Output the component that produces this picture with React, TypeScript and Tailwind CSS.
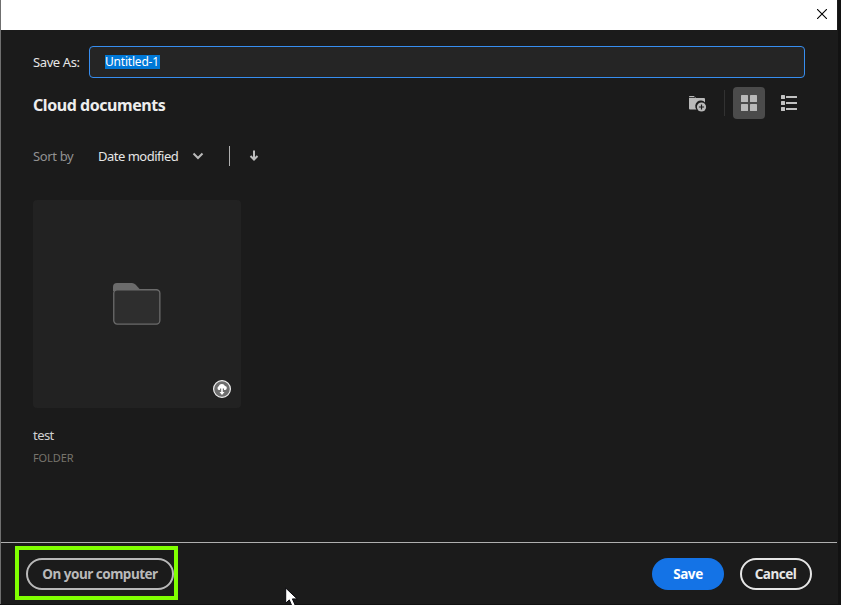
import React from "react";

function FolderPlus() {
  return (
    <svg width="20" height="20" viewBox="0 0 20 20" className="relative top-px block">
      <path d="M1 2.800Q1 2 1.800 2H5.800L8 4H16Q17 4 17 5V8.500A5.500 5.500 0 0 0 8.500 15.500H2Q1 15.500 1 14.500Z" fill="#b9b9b9" />
      <path d="M1 3.500H7" stroke="#1b1b1b" strokeWidth="0.8" />
      <circle cx="13.500" cy="13" r="4.600" fill="#b9b9b9" />
      <path d="M13.500 10.400V15.600M10.900 13H16.100" stroke="#1b1b1b" strokeWidth="1.200" />
    </svg>
  );
}

function GridIcon() {
  return (
    <svg width="16" height="16" viewBox="0 0 16 16" fill="#b9b9b9">
      <rect width="7" height="7" rx=".5" />
      <rect x="9" width="7" height="7" rx=".5" />
      <rect y="9" width="7" height="7" rx=".5" />
      <rect x="9" y="9" width="7" height="7" rx=".5" />
    </svg>
  );
}

function ListIcon() {
  return (
    <svg width="16" height="16" viewBox="0 0 16 16" fill="#c2c2c2">
      {[0, 6, 12].map((y) => (
        <g key={y}>
          <rect y={y} width="4" height="4" rx=".5" />
          <rect x="5" y={y + 1} width="11" height="2" rx=".3" />
        </g>
      ))}
    </svg>
  );
}

function FolderCard() {
  return (
    <div className="relative flex h-[208px] w-[208px] items-center justify-center rounded bg-[#222222]">
      <svg width="48" height="42" viewBox="0 0 48 42" className="block">
        <path d="M0 8V4Q0 0 4 0H19Q21 0 22.500 1.500L27.500 7V8Z" fill="#6b6b6b" />
        <rect x=".75" y="6.750" width="46.100" height="34.300" rx="3.500" fill="#2e2e2e" stroke="#6b6b6b" strokeWidth="1.300" />
      </svg>
      <svg width="18" height="18" viewBox="0 0 18 18" className="absolute bottom-[10px] right-[10px]">
        <circle cx="9" cy="9" r="8.400" fill="#6e6e6e" stroke="#f0f0f0" strokeWidth="1.200" />
        <path d="M5.800 10A2 2 0 0 1 5.700 6.300A3.500 3.500 0 0 1 12 5.900A2.100 2.100 0 0 1 12.300 10H11V8.500H7V10Z" fill="#fff" />
        <path d="M8.200 8H9.800V12H11.500L9 15L6.500 12H8.200Z" fill="#fff" />
      </svg>
    </div>
  );
}

export default function App() {
  return (
    <div className="relative flex h-[605px] w-[841px] overflow-hidden bg-[#121212] font-['Noto_Sans',sans-serif] text-[13px] leading-5 text-[#e6e6e6]">
      <div className="flex h-[604px] w-[837px] flex-col border-l border-[#6f6f6f] bg-[#1b1b1b]">
        <header className="flex h-[30px] shrink-0 items-start justify-end bg-white pr-[10px] pt-[9px]">
          <svg width="10" height="10" viewBox="0 0 10 10" stroke="#000" strokeWidth="1.100">
            <path d="M0 0L10 10M10 0L0 10" />
          </svg>
        </header>

        <main className="flex h-[512px] shrink-0 flex-col pl-8 pr-8 pt-4">
          <div className="flex h-8 items-center">
            <label className="w-14 whitespace-nowrap tracking-[-0.4px]">Save As:</label>
            <div className="flex h-8 w-[716px] items-center rounded border border-[#378ef0] bg-[#252525] pl-[15px]">
              <span className="mb-[1px] flex h-[14px] w-[55px] items-center whitespace-nowrap bg-[#0078d7] text-xs tracking-[-0.2px] text-white">Untitled-1</span>
            </div>
          </div>

          <div className="mt-2 flex h-[34px] items-center">
            <h1 className="mt-1 whitespace-nowrap text-base font-bold tracking-[-0.45px] text-[#ededed]">Cloud documents</h1>
            <div className="ml-auto flex items-center">
              <FolderPlus />
              <div className="ml-4 h-[26px] w-px bg-[#323232]" />
              <div className="ml-2 flex h-8 w-8 items-center justify-center rounded bg-[#4b4b4b]">
                <GridIcon />
              </div>
              <div className="ml-4 mr-2"><ListIcon /></div>
            </div>
          </div>

          <div className="mt-[26px] flex h-5 items-center">
            <span className="w-[65px] whitespace-nowrap tracking-[-0.35px] text-[#929292]">Sort by</span>
            <span className="w-[94px] whitespace-nowrap tracking-[-0.5px]">Date modified</span>
            <svg width="12" height="8" viewBox="0 0 12 8" fill="none" stroke="#b9b9b9" strokeWidth="2">
              <path d="M1.500 1.500L6 6L10.500 1.500" />
            </svg>
            <div className="ml-[25px] h-5 w-px bg-[#b0b0b0]" />
            <svg width="10" height="12" viewBox="0 0 10 12" className="ml-[19px]" fill="none" stroke="#bdbdbd" strokeWidth="2">
              <path d="M5 .5V9M1.500 6L5 9.500L8.500 6" />
            </svg>
          </div>

          <div className="mt-[34px]"><FolderCard /></div>
          <div className="mt-[17px] h-5 tracking-[-0.55px] text-[#d0d0d0]">test</div>
          <div className="mt-[3px] h-5 text-[11px] tracking-[-0.1px] text-[#77746c]">FOLDER</div>
        </main>

        <footer className="flex h-[62px] shrink-0 items-start border-t border-[#b0b0b0] pl-[14px] pr-[25px] pt-[3px] text-[13.5px] font-bold">
          <div className="flex h-[54px] w-[163px] items-start border-4 border-[#80ff00] pl-[7px] pt-2">
            <button className="h-8 w-[148px] shrink-0 whitespace-nowrap rounded-full border-2 border-[#b9b9b9] text-center tracking-[-0.5px] text-[#b9b9b9]">On your computer</button>
          </div>
          <div className="ml-auto mt-3 flex gap-4">
            <button className="h-8 w-[72px] rounded-full bg-[#1473e6] tracking-[-0.4px] text-white">Save</button>
            <button className="h-8 w-[72px] rounded-full border-2 border-[#e6e6e6] pr-px tracking-[-0.5px] text-[#e6e6e6]">Cancel</button>
          </div>
        </footer>
      </div>
      <div className="h-[604px] w-px bg-[#1b1b1b]" />
      <svg width="14" height="20" viewBox="0 0 14 20" className="absolute left-[285px] top-[587px]">
        <path d="M.7 1V16.200L4.300 12.900L7.100 19.500L10.200 18.200L7.400 11.900H12.200Z" fill="#fff" stroke="#08080d" strokeWidth="1" />
      </svg>
    </div>
  );
}
